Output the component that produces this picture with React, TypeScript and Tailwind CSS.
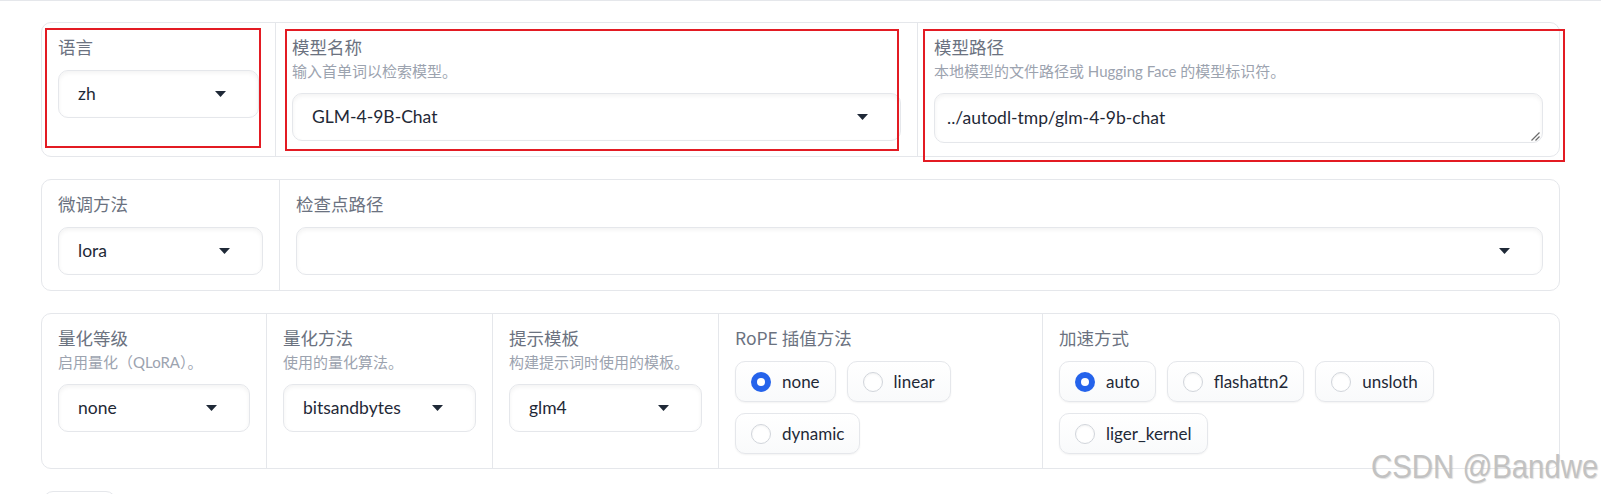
import React from "react";

const FONT = "font-['Lato','Noto_Sans_CJK_SC','Noto_Sans',sans-serif]";

function Label({ children }: { children: React.ReactNode }) {
  return (
    <div className="font-['Noto_Sans_CJK_SC','Noto_Sans',sans-serif] text-[17.5px] leading-[26px] text-[#6b7280]">
      {children}
    </div>
  );
}

function Info({ children }: { children: React.ReactNode }) {
  return <div className="text-[15px] leading-[23px] text-[#9ca3af]">{children}</div>;
}

function Caret() {
  return (
    <svg width="11" height="6" viewBox="0 0 11 6" className="shrink-0">
      <path d="M0 0H11L5.5 6Z" fill="#1f2937" />
    </svg>
  );
}

function Select({ value }: { value?: string }) {
  return (
    <div className="mt-[10px] flex h-[48px] items-center rounded-[10px] border border-[#e5e7eb] bg-white pl-[19px] pr-[32px] shadow-[inset_0_2px_4px_0_rgba(0,0,0,0.05)]">
      <span className="flex-1 text-[17.5px] leading-[24px] text-[#1f2937]">{value ?? ""}</span>
      <Caret />
    </div>
  );
}

function TextArea({ value }: { value: string }) {
  return (
    <div className="relative mt-[10px] flex h-[50px] items-center rounded-[10px] border border-[#e5e7eb] bg-white px-[12px] shadow-[inset_0_2px_4px_0_rgba(0,0,0,0.05)]">
      <span className="text-[17.5px] leading-[24px] text-[#1f2937]">{value}</span>
      <svg width="9" height="9" viewBox="0 0 9 9" className="absolute bottom-[1px] right-[2px]">
        <path d="M0.5 8.5L8.5 0.5M4.5 8.5L8.5 4.5" stroke="#6b6b6b" strokeWidth="1.2" />
      </svg>
    </div>
  );
}

function Radio({ label, checked }: { label: string; checked?: boolean }) {
  return (
    <div className="flex h-[41px] items-center gap-[11px] rounded-[10px] border border-[#e5e7eb] bg-gradient-to-t from-[#f9fafb] to-white px-[15px] shadow-[0_1px_2px_0_rgba(0,0,0,0.05)]">
      {checked ? (
        <span className="flex h-[20px] w-[20px] items-center justify-center rounded-full bg-[#2563eb]">
          <span className="h-[8px] w-[8px] rounded-full bg-white" />
        </span>
      ) : (
        <span className="h-[20px] w-[20px] rounded-full border border-[#d1d5db] bg-white shadow-[inset_0_1px_2px_0_rgba(0,0,0,0.05)]" />
      )}
      <span className="text-[17px] leading-[24px] text-[#1f2937]">{label}</span>
    </div>
  );
}

const col = "px-[16px] pt-[11px]";

export default function App() {
  return (
    <div className={`relative min-h-[494px] w-full overflow-hidden border-t border-[#e5e7eb] bg-white ${FONT}`}>
      <div className="flex flex-col gap-[22px] px-[41px] pt-[21px]">
        {/* Row 1 */}
        <div className="flex rounded-[10px] border border-[#e5e7eb] bg-white">
          <div className={`w-[233px] shrink-0 pb-[13px] ${col}`}>
            <Label>语言</Label>
            <Select value="zh" />
          </div>
          <div className={`flex-1 border-l border-[#e5e7eb] pb-[13px] ${col}`}>
            <Label>模型名称</Label>
            <Info>输入首单词以检索模型。</Info>
            <Select value="GLM-4-9B-Chat" />
          </div>
          <div className={`flex-1 border-l border-[#e5e7eb] pb-[13px] ${col}`}>
            <Label>模型路径</Label>
            <Info>本地模型的文件路径或 Hugging Face 的模型标识符。</Info>
            <TextArea value="../autodl-tmp/glm-4-9b-chat" />
          </div>
        </div>

        {/* Row 2 */}
        <div className="flex rounded-[10px] border border-[#e5e7eb] bg-white">
          <div className={`w-[237px] shrink-0 pb-[15px] ${col}`}>
            <Label>微调方法</Label>
            <Select value="lora" />
          </div>
          <div className={`flex-1 border-l border-[#e5e7eb] pb-[15px] ${col}`}>
            <Label>检查点路径</Label>
            <Select />
          </div>
        </div>

        {/* Row 3 */}
        <div className="flex rounded-[10px] border border-[#e5e7eb] bg-white">
          <div className={`w-[224px] shrink-0 pb-[14px] ${col}`}>
            <Label>量化等级</Label>
            <Info>启用量化（QLoRA）。</Info>
            <Select value="none" />
          </div>
          <div className={`w-[226px] shrink-0 border-l border-[#e5e7eb] pb-[14px] ${col}`}>
            <Label>量化方法</Label>
            <Info>使用的量化算法。</Info>
            <Select value="bitsandbytes" />
          </div>
          <div className={`w-[226px] shrink-0 border-l border-[#e5e7eb] pb-[14px] ${col}`}>
            <Label>提示模板</Label>
            <Info>构建提示词时使用的模板。</Info>
            <Select value="glm4" />
          </div>
          <div className={`w-[324px] shrink-0 border-l border-[#e5e7eb] pb-[14px] ${col}`}>
            <Label>RoPE 插值方法</Label>
            <div className="mt-[10px] flex flex-wrap gap-[11px]">
              <Radio label="none" checked />
              <Radio label="linear" />
              <Radio label="dynamic" />
            </div>
          </div>
          <div className={`flex-1 border-l border-[#e5e7eb] pb-[14px] ${col}`}>
            <Label>加速方式</Label>
            <div className="mt-[10px] flex flex-wrap gap-[11px]">
              <Radio label="auto" checked />
              <Radio label="flashattn2" />
              <Radio label="unsloth" />
              <Radio label="liger_kernel" />
            </div>
          </div>
        </div>

        {/* partially visible element */}
        <div className="ml-[2px] h-[40px] w-[73px] rounded-[10px] border border-[#e5e7eb] bg-white" />
      </div>

      {/* annotation boxes */}
      <div className="pointer-events-none absolute left-[45px] top-[27px] h-[120px] w-[216px] border-2 border-[#e31b23]" />
      <div className="pointer-events-none absolute left-[285px] top-[28px] h-[122px] w-[614px] border-2 border-[#e31b23]" />
      <div className="pointer-events-none absolute left-[923px] top-[28px] h-[133px] w-[642px] border-2 border-[#e31b23]" />

      {/* watermark */}
      <div className="pointer-events-none absolute left-[1371px] top-[449px] origin-left scale-x-[0.89] whitespace-nowrap font-['Liberation_Sans',Arial,sans-serif] text-[33px] leading-[33px] text-[#c2c2c2] [text-shadow:1px_1px_1px_rgba(0,0,0,0.12)]">
        CSDN @Bandwe
      </div>
    </div>
  );
}
